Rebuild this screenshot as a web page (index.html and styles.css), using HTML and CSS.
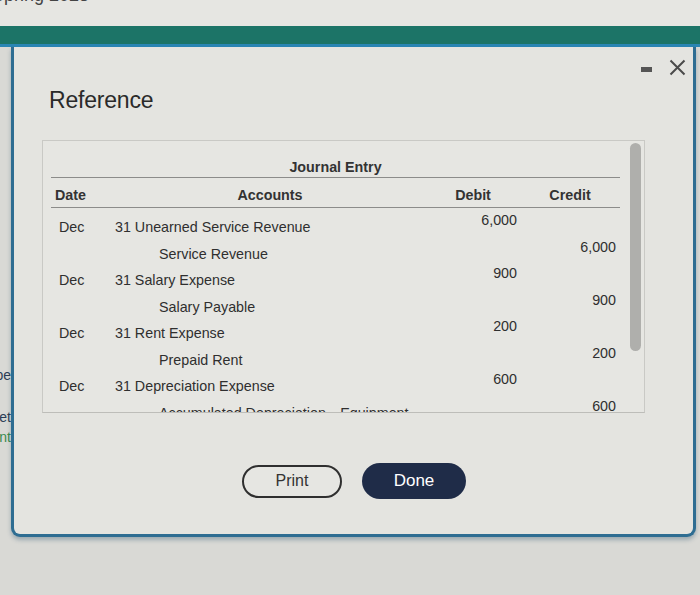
FILE: index.html
```html
<!DOCTYPE html>
<html lang="en">
<head>
<meta charset="utf-8">
<title>Reference</title>
<link rel="stylesheet" href="styles.css">
</head>
<body>
<div class="topstrip"><span class="term">Spring 2023</span></div>
<div class="tealbar"></div>
<div class="stage">
  <div class="leftedge">
    <span class="edge-e">Type</span>
    <span class="edge-et">Budget</span>
    <span class="edge-nt">Statement</span>
  </div>
  <div class="modal">
    <div class="controls">
      <span class="minimize"></span>
      <svg class="close" width="17" height="17" viewBox="0 0 17 17"><path d="M1.5 1.5 L15.5 15.5 M15.5 1.5 L1.5 15.5" stroke="#4a4a4a" stroke-width="2" fill="none"/></svg>
    </div>
    <h1 class="title">Reference</h1>
    <div class="tablebox">
      <div class="tablearea">
        <div class="caption">Journal Entry</div>
        <div class="grid head">
          <div class="c-date">Date</div>
          <div class="c-acct center">Accounts</div>
          <div class="c-debit center">Debit</div>
          <div class="c-credit center">Credit</div>
        </div>
        <div class="grid body">
          <div class="c-date">Dec</div><div class="c-acct">31 Unearned Service Revenue</div><div class="amt debit">6,000</div><div class="amt credit"></div>
          <div class="c-date"></div><div class="c-acct indent">Service Revenue</div><div class="amt debit"></div><div class="amt credit">6,000</div>
          <div class="c-date">Dec</div><div class="c-acct">31 Salary Expense</div><div class="amt debit">900</div><div class="amt credit"></div>
          <div class="c-date"></div><div class="c-acct indent">Salary Payable</div><div class="amt debit"></div><div class="amt credit">900</div>
          <div class="c-date">Dec</div><div class="c-acct">31 Rent Expense</div><div class="amt debit">200</div><div class="amt credit"></div>
          <div class="c-date"></div><div class="c-acct indent">Prepaid Rent</div><div class="amt debit"></div><div class="amt credit">200</div>
          <div class="c-date">Dec</div><div class="c-acct">31 Depreciation Expense</div><div class="amt debit">600</div><div class="amt credit"></div>
          <div class="c-date"></div><div class="c-acct indent">Accumulated Depreciation—Equipment</div><div class="amt debit"></div><div class="amt credit">600</div>
        </div>
      </div>
      <div class="scrolltrack"><div class="thumb"></div></div>
    </div>
    <div class="buttons">
      <button class="btn print">Print</button>
      <button class="btn done">Done</button>
    </div>
  </div>
</div>
</body>
</html>
```
FILE: styles.css
```css
* { box-sizing: border-box; }
html, body {
  margin: 0;
  padding: 0;
}
body {
  width: 700px;
  height: 595px;
  overflow: hidden;
  background: #d9d9d5;
  font-family: "Liberation Sans", Arial, sans-serif;
  color: #333;
}
.topstrip {
  height: 26px;
  background: #e6e6e2;
  overflow: hidden;
}
.term {
  display: block;
  font-size: 18px;
  line-height: 18px;
  margin-top: -14px;
  margin-left: -8px;
  color: #444;
}
.tealbar {
  height: 21px;
  background: #1c7467;
  border-bottom: 3px solid #2a86b4;
}
.stage {
  display: flex;
  height: 548px;
}
.leftedge {
  width: 12px;
  display: flex;
  flex-direction: column;
  align-items: flex-end;
  padding-top: 318px;
  overflow: hidden;
  font-size: 14px;
  line-height: 20px;
  white-space: nowrap;
}
.leftedge span {
  display: block;
  direction: rtl;
  width: 12px;
  overflow: hidden;
}
.edge-e { color: #2b3d55; }
.edge-et { color: #2b3d55; margin-top: 22px; }
.edge-nt { color: #3a8a50; }
.modal {
  flex: 1;
  margin-right: 4px;
  height: 490px;
  background: #e4e4e0;
  border: 3px solid #2e6d92;
  border-top: none;
  border-radius: 0 0 9px 9px;
  box-shadow: 0 3px 4px rgba(40, 80, 110, 0.35);
  display: flex;
  flex-direction: column;
}
.controls {
  display: flex;
  justify-content: flex-end;
  align-items: center;
  gap: 17px;
  height: 20px;
  margin-top: 10px;
  padding-right: 7px;
}
.minimize {
  display: block;
  width: 11px;
  height: 5px;
  background: #555;
  margin-top: 4px;
}
.title {
  margin: 9px 0 0 35px;
  font-size: 23px;
  line-height: 28px;
  font-weight: normal;
  color: #2a2a2a;
  letter-spacing: -0.2px;
}
.tablebox {
  margin: 26px 48px 0 28px;
  height: 273px;
  border: 1px solid #c9c9c5;
  border-bottom-color: #bdbdb9;
  background: #e6e6e2;
  display: flex;
  overflow: hidden;
}
.tablearea {
  width: 577px;
  padding-left: 8px;
  overflow: hidden;
}
.caption {
  margin-top: 17px;
  height: 20px;
  line-height: 18px;
  font-size: 14.3px;
  font-weight: bold;
  text-align: center;
  border-bottom: 1px solid #8c8c8a;
  color: #333;
}
.grid {
  display: grid;
  grid-template-columns: 64px 310px 96px 98px;
  font-size: 14.3px;
}
.head {
  height: 30px;
  align-items: center;
  font-weight: bold;
  border-bottom: 1px solid #8c8c8a;
  padding-top: 5px;
}
.head .c-date { padding-left: 4px; }
.center { text-align: center; }
.body {
  padding-top: 6px;
  grid-auto-rows: 26.5px;
  align-items: center;
  color: #2f2f2f;
}
.body .c-date {
  padding-left: 8px;
}
.c-acct { white-space: nowrap; }
.indent { padding-left: 44px; }
.amt {
  align-self: start;
  line-height: 12px;
  text-align: right;
}
.debit { padding-right: 4px; }
.credit { padding-right: 3px; }
.scrolltrack {
  width: 24px;
  padding: 2px 0 0 10px;
}
.thumb {
  width: 11px;
  height: 208px;
  border-radius: 6px;
  background: #afafac;
}
.buttons {
  display: flex;
  justify-content: center;
  align-items: center;
  gap: 20px;
  margin-top: 50px;
  padding-left: 1px;
}
.btn {
  font-family: "Liberation Sans", Arial, sans-serif;
  height: 34px;
  border-radius: 17px;
  cursor: pointer;
}
.print {
  width: 100px;
  font-size: 16px;
  background: #e6e6e2;
  border: 2px solid #2f2f2f;
  color: #333;
  height: 33px;
}
.done {
  width: 104px;
  height: 36px;
  border-radius: 18px;
  font-size: 17px;
  background: #1f2c48;
  border: none;
  color: #fff;
}
```
